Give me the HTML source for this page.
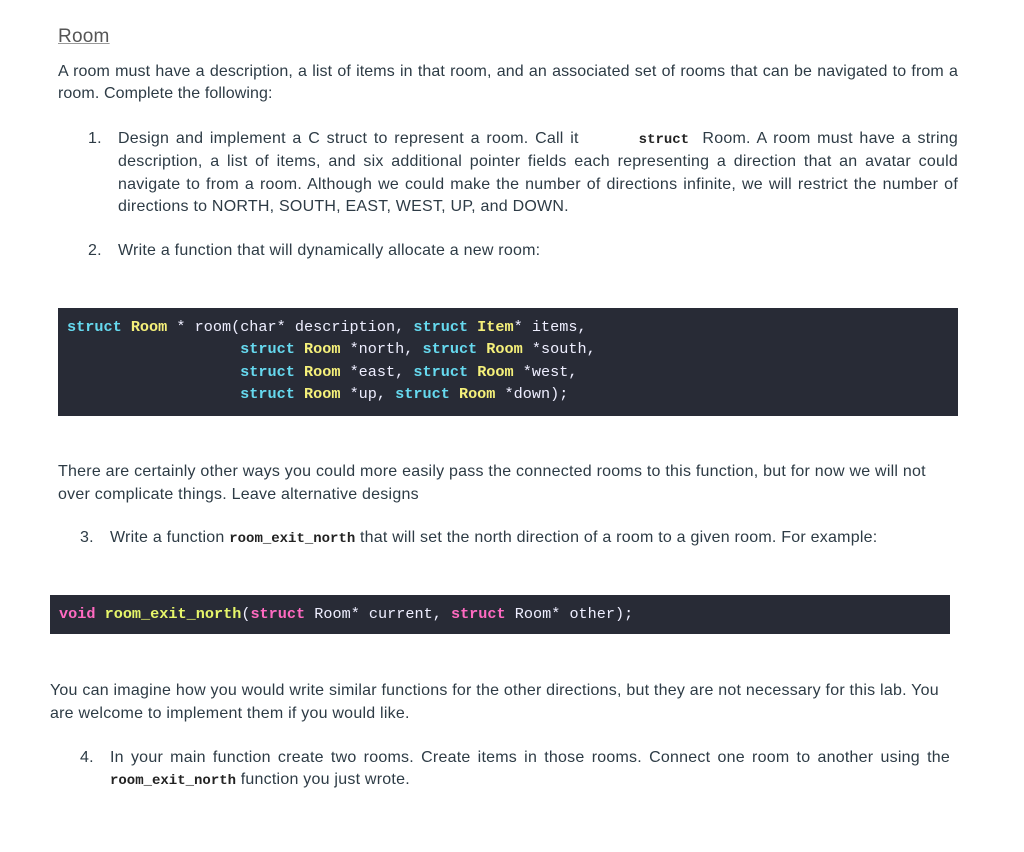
<!DOCTYPE html>
<html><head><meta charset="utf-8"><style>
body{margin:0;background:#fff;font-family:"Liberation Sans",sans-serif;font-size:16px;letter-spacing:0.23px;color:#2d3b45;}
.a{position:absolute;white-space:nowrap;line-height:22px}
.j{position:absolute;line-height:22.3px;text-align:justify}
b.m{font-family:"Liberation Mono",monospace;font-weight:bold;font-size:14px;color:#222;letter-spacing:0}
.cb{position:absolute;background:#282b36;color:#eef;font-family:"Liberation Mono",monospace;font-size:15.2px;letter-spacing:0;line-height:22.4px;white-space:pre;}
.k{color:#66d9ef;font-weight:bold}.t{color:#f5f07a;font-weight:bold}
.p{color:#ff6ac1;font-weight:bold}.f{color:#e6f56a;font-weight:bold}
</style></head><body>
<div class="a" style="left:58px;top:26px;font-size:19px;color:#555;text-decoration:underline;text-decoration-color:#999">Room</div>
<div class="j" style="left:58px;top:61px;width:900px;letter-spacing:0.1px">A room must have a description, a list of items in that room, and an associated set of rooms that can be navigated to from a room. Complete the following:</div>
<div class="a" style="left:88px;top:128px">1.</div>
<div class="j" style="left:118px;top:128px;width:840px">Design and implement a C struct to represent a room. Call it &nbsp; &nbsp; &nbsp; &nbsp; <b class="m">struct</b> &nbsp;Room. A room must have a string description, a list of items, and six additional pointer fields each representing a direction that an avatar could navigate to from a room. Although we could make the number of directions infinite, we will restrict the number of directions to NORTH, SOUTH, EAST, WEST, UP, and DOWN.</div>
<div class="a" style="left:88px;top:240px">2.</div>
<div class="a" style="left:118px;top:240px">Write a function that will dynamically allocate a new room:</div>
<div class="cb" style="left:58px;top:308px;width:891px;height:98px;padding:8px 0 2px 9px"><span class="k">struct</span> <span class="t">Room</span> * room(char* description, <span class="k">struct</span> <span class="t">Item</span>* items,
                   <span class="k">struct</span> <span class="t">Room</span> *north, <span class="k">struct</span> <span class="t">Room</span> *south,
                   <span class="k">struct</span> <span class="t">Room</span> *east, <span class="k">struct</span> <span class="t">Room</span> *west,
                   <span class="k">struct</span> <span class="t">Room</span> *up, <span class="k">struct</span> <span class="t">Room</span> *down);</div>
<div class="a" style="left:58px;top:460px;line-height:23px">There are certainly other ways you could more easily pass the connected rooms to this function, but for now we will not<br>over complicate things. Leave alternative designs</div>
<div class="a" style="left:80px;top:527px">3.</div>
<div class="a" style="left:110px;top:527px">Write a function <b class="m">room_exit_north</b> that will set the north direction of a room to a given room. For example:</div>
<div class="cb" style="left:50px;top:595px;width:891px;height:39px;padding:0 0 0 9px;line-height:39px"><span class="p">void</span> <span class="f">room_exit_north</span>(<span class="p">struct</span> Room* current, <span class="p">struct</span> Room* other);</div>
<div class="a" style="left:50px;top:679px;line-height:23px">You can imagine how you would write similar functions for the other directions, but they are not necessary for this lab. You<br>are welcome to implement them if you would like.</div>
<div class="a" style="left:80px;top:747px">4.</div>
<div class="j" style="left:110px;top:747px;width:840px">In your main function create two rooms. Create items in those rooms. Connect one room to another using the <b class="m">room_exit_north</b> function you just wrote.</div>
</body></html>
